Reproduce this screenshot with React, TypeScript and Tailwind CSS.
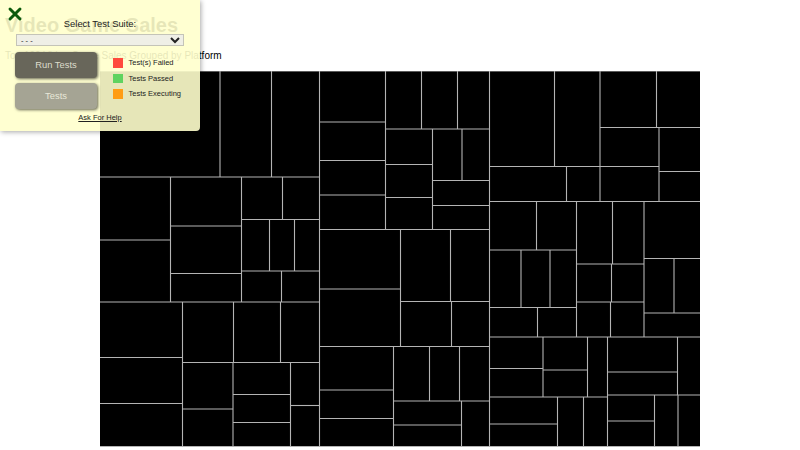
import { X } from "lucide-react";

// x1, y1, x2, y2 of every divider in the treemap, page coordinates
const lines: number[][] = [
  // outer edges
  [100, 71, 700, 71], [100, 446.5, 700, 446.5],
  // main columns
  [319.5, 71, 319.5, 446], [489.5, 71, 489.5, 446],
  // column 1
  [220, 71, 220, 177], [271.5, 71, 271.5, 177], [100, 177, 319.5, 177], [100, 302, 319.5, 302],
  [170.5, 177, 170.5, 302], [241.5, 177, 241.5, 302], [100, 240, 170.5, 240], [170.5, 226, 241.5, 226], [170.5, 273.5, 241.5, 273.5],
  [241.5, 219.5, 319.5, 219.5], [282.5, 177, 282.5, 219.5], [269.5, 219.5, 269.5, 271], [294.5, 219.5, 294.5, 271],
  [241.5, 271, 319.5, 271], [281.5, 271, 281.5, 302],
  [182.5, 302, 182.5, 446], [100, 357.5, 182.5, 357.5], [100, 403.5, 182.5, 403.5],
  [233.5, 302, 233.5, 362.5], [280.5, 302, 280.5, 362.5], [182.5, 362.5, 319.5, 362.5],
  [233, 362.5, 233, 446], [182.5, 409, 233, 409], [290.5, 362.5, 290.5, 446],
  [233, 394.5, 290.5, 394.5], [233, 422.5, 290.5, 422.5], [290.5, 405.5, 319.5, 405.5],
  // column 2
  [319.5, 229.5, 489.5, 229.5], [319.5, 346.5, 489.5, 346.5], [385.5, 71, 385.5, 229.5],
  [319.5, 122, 385.5, 122], [319.5, 160.5, 385.5, 160.5], [319.5, 195, 385.5, 195],
  [421.5, 71, 421.5, 129], [457.5, 71, 457.5, 129], [385.5, 129, 489.5, 129],
  [432.5, 129, 432.5, 229.5], [385.5, 164.5, 432.5, 164.5], [385.5, 197.5, 432.5, 197.5],
  [462, 129, 462, 180.5], [432.5, 180.5, 489.5, 180.5], [432.5, 205.5, 489.5, 205.5],
  [400.5, 229.5, 400.5, 346.5], [319.5, 289, 400.5, 289], [400.5, 301.5, 489.5, 301.5],
  [450.5, 229.5, 450.5, 301.5], [451.5, 301.5, 451.5, 346.5],
  [393.5, 346.5, 393.5, 446], [319.5, 390, 393.5, 390], [319.5, 418.5, 393.5, 418.5],
  [429.5, 346.5, 429.5, 401], [459.5, 346.5, 459.5, 401], [393.5, 401, 489.5, 401],
  [461.5, 401, 461.5, 446], [393.5, 425, 461.5, 425],
  // column 3
  [489.5, 201.5, 700, 201.5], [489.5, 337, 700, 337], [600, 71, 600, 201.5], [489.5, 166.5, 659, 166.5],
  [554.5, 71, 554.5, 166.5], [566.5, 166.5, 566.5, 201.5], [600, 127.5, 700, 127.5],
  [656.5, 71, 656.5, 127.5], [659, 127.5, 659, 201.5], [659, 171.5, 700, 171.5],
  [576.5, 201.5, 576.5, 337], [489.5, 250, 576.5, 250], [536.5, 201.5, 536.5, 250],
  [521, 250, 521, 307.5], [550, 250, 550, 307.5], [489.5, 307.5, 576.5, 307.5], [537.5, 307.5, 537.5, 337],
  [644, 201.5, 644, 337], [612.5, 201.5, 612.5, 264], [576.5, 264, 644, 264], [611.5, 264, 611.5, 302],
  [576.5, 302, 644, 302], [610.5, 302, 610.5, 337], [644, 258.5, 700, 258.5], [674, 258.5, 674, 313], [644, 313, 700, 313],
  [607.5, 337, 607.5, 446], [489.5, 397, 607.5, 397], [543, 337, 543, 397], [489.5, 368.5, 543, 368.5],
  [587.5, 337, 587.5, 397], [543, 370, 587.5, 370], [557.5, 397, 557.5, 446], [583.5, 397, 583.5, 446],
  [489.5, 424, 557.5, 424], [677.5, 337, 677.5, 395], [607.5, 372, 677.5, 372], [607.5, 395, 700, 395],
  [654.5, 395, 654.5, 446], [678, 395, 678, 446], [607.5, 421, 654.5, 421],
];

const legend = [
  { label: "Test(s) Failed", color: "bg-[#ff4a3d]" },
  { label: "Tests Passed", color: "bg-[#5fd35f]" },
  { label: "Tests Executing", color: "bg-[#ff9d14]" },
];

function Treemap() {
  return (
    <svg width={600} height={376} viewBox="100 71 600 376" className="ml-[100px] mt-[9px] block">
      <rect x={100} y={71} width={600} height={375} fill="#000" />
      {lines.map((l, i) => (
        <line key={i} x1={l[0]} y1={l[1]} x2={l[2]} y2={l[3]} stroke="#b4b4b4" strokeWidth={1.1} />
      ))}
    </svg>
  );
}

function TestPanel() {
  return (
    <div className="absolute left-0 top-0 h-[131px] w-[200px] rounded-br-[4px] bg-[#ffffcc]/90 text-[#222] shadow-[1px_1px_5px_rgba(0,0,0,0.35)]">
      <X size={20} strokeWidth={3.5} className="absolute left-[5px] top-[4px] text-[#0b5a0b]" />
      <p className="pt-[17px] text-center text-[9.4px] leading-[13px]">Select Test Suite:</p>
      <select className="mx-auto mt-[4px] block h-[11.5px] w-[168px] border border-[#c4c4b8] bg-[#efefe6] text-[7.5px] leading-[9px] text-[#222]">
        <option>- - -</option>
      </select>
      <div className="mt-[6px] flex pl-[15px]">
        <div className="flex w-[82px] flex-col gap-[5.5px]">
          <button className="h-[26px] rounded-[4px] bg-[#68665a] pt-[1px] text-[9.4px] text-[#ddddcc] shadow-[1px_1px_3px_rgba(0,0,0,0.6)]">Run Tests</button>
          <button className="h-[26px] rounded-[4px] bg-[#a5a494] pt-[1px] text-[9.4px] text-[#e8e8d8] shadow-[1px_1px_3px_rgba(0,0,0,0.6)]">Tests</button>
        </div>
        <ul className="ml-[16px] mt-[6.5px] flex flex-col gap-[6px]">
          {legend.map((item) => (
            <li key={item.label} className="flex h-[9.5px] items-center gap-[6px] text-[7.5px] leading-[9px]">
              <span className={`h-[9.5px] w-[9.5px] ${item.color}`} />
              {item.label}
            </li>
          ))}
        </ul>
      </div>
      <p className="mt-[4px] text-center text-[7.5px] leading-[10px] underline">Ask For Help</p>
    </div>
  );
}

export default function App() {
  return (
    <div className="relative h-[450px] w-[800px] overflow-hidden bg-white font-['Liberation_Sans',Arial,sans-serif] text-black">
      <div className="px-[5px] pt-[13px]">
        <h1 className="text-[20px] font-bold leading-[24px]">Video Game Sales</h1>
        <p className="mt-[13px] text-[10px] leading-[12px]">Top 100 Video Game Sales Grouped by Platform</p>
      </div>
      <Treemap />
      <TestPanel />
    </div>
  );
}
